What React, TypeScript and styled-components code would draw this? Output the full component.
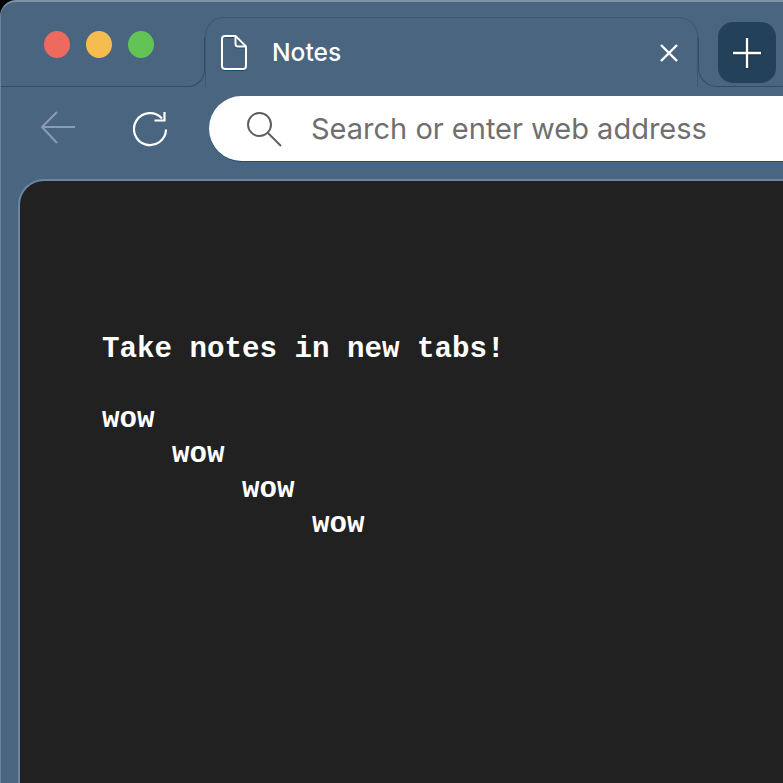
import styled, {createGlobalStyle} from 'styled-components';

const GlobalStyle = createGlobalStyle`
  html, body {
    margin: 0;
    padding: 0;
    background: #000;
  }
  #root {
    width: 783px;
    height: 783px;
    overflow: hidden;
  }
`;

const BAR = '#4a6580';
const EDGE = '#344b61';

const Window = styled.div`
  width: 783px;
  height: 783px;
  box-sizing: border-box;
  display: flex;
  flex-direction: column;
  background: ${BAR};
  border-top: 2px solid #7d93a9;
  border-left: 1px solid #6c8298;
  border-top-left-radius: 16px;
  overflow: hidden;
`;

const TabStrip = styled.div`
  height: 85px;
  flex: none;
  display: flex;
`;

const Lights = styled.div`
  position: relative;
  width: 204px;
  flex: none;
  box-sizing: border-box;
  display: flex;
  gap: 16px;
  padding: 29px 0 0 43px;

  /* soft edge that curves from the tab side into the strip bottom */
  &::after {
    content: '';
    position: absolute;
    left: -2px;
    right: 0;
    bottom: 0;
    height: 50px;
    box-sizing: border-box;
    border-right: 1px solid ${EDGE};
    border-bottom: 1px solid ${EDGE};
    border-bottom-right-radius: 17px;
    filter: blur(0.6px);
  }
`;

const Light = styled.span<{$color: string}>`
  width: 26px;
  height: 27px;
  border-radius: 50%;
  background: ${(p) => p.$color};
`;

const Tab = styled.div`
  width: 493px;
  flex: none;
  margin-top: 15px;
  box-sizing: border-box;
  display: flex;
  align-items: flex-start;
  padding: 17px 18px 0 15px;
  border-top: 1px solid #3f586f;
  border-left: 1px solid #3f586f;
  border-right: 1px solid #3f586f;
  border-radius: 19px 19px 0 0;
`;

const DocIcon = styled.svg`
  flex: none;
  filter: drop-shadow(0 1px 0 #1f4a6b);
`;

const TabTitle = styled.span`
  margin-left: 25px;
  flex: 1;
  font: 500 24.6px/34px 'Inter', sans-serif;
  color: #fff;
`;

const TabClose = styled.svg`
  margin-top: 8px;
  width: 20px;
  height: 20px;
`;

const NewTabArea = styled.div`
  position: relative;
  flex: 1;
  box-sizing: border-box;
  padding: 20px 0 0 20px;

  &::before {
    content: '';
    position: absolute;
    left: 0;
    right: 0;
    bottom: 0;
    height: 50px;
    box-sizing: border-box;
    border-left: 1px solid ${EDGE};
    border-bottom: 1px solid ${EDGE};
    border-bottom-left-radius: 19px;
    filter: blur(0.6px);
  }
`;

const NewTabButton = styled.div`
  position: relative;
  width: 58px;
  height: 61px;
  border-radius: 15px;
  background: #23425a;
  display: flex;
  align-items: center;
  justify-content: center;
`;

const PlusIcon = styled.svg`
  filter: drop-shadow(0 0 1px #0c1722);
`;

const Toolbar = styled.div`
  height: 92px;
  flex: none;
  display: flex;
  align-items: flex-start;
`;

const NavIcon = styled.svg<{$left: number}>`
  flex: none;
  margin-top: 23px;
  margin-left: ${(p) => p.$left}px;
`;

const AddressBar = styled.div`
  flex: 1;
  height: 65px;
  margin: 9px 0 0 40px;
  box-sizing: border-box;
  display: flex;
  align-items: center;
  padding-left: 37px;
  background: #fff;
  border-radius: 33px 0 0 33px;
  box-shadow: 0 1px 0 #1d5078;
`;

const AddressText = styled.span`
  margin-left: 29px;
  font: 400 29px/1 'Inter', sans-serif;
  color: #6f6f6f;
  white-space: nowrap;
`;

const Content = styled.div`
  flex: 1;
  margin-left: 17px;
  box-sizing: border-box;
  padding: 151px 0 0 82px;
  background: #212121;
  border-top: 2px solid #6b87a0;
  border-left: 2px solid #6b87a0;
  border-top-left-radius: 26px;
`;

const Note = styled.pre`
  margin: 0;
  font: 700 29.17px/35px 'Liberation Mono', monospace;
  color: #fff;
`;

export default function App() {
  return (
    <>
      <GlobalStyle />
      <Window>
        <TabStrip>
          <Lights>
            <Light $color='#ee6a5f' />
            <Light $color='#f5bd4f' />
            <Light $color='#61c454' />
          </Lights>
          <Tab>
            <DocIcon width='26' height='35' viewBox='0 0 26 35' fill='none' stroke='#fff' strokeWidth='2'>
              <path d='M4 1h10.5L25 11.5V31a3 3 0 0 1-3 3H4a3 3 0 0 1-3-3V4a3 3 0 0 1 3-3z' />
              <path d='M14.5 1v8a2.5 2.5 0 0 0 2.5 2.5h8' />
            </DocIcon>
            <TabTitle>Notes</TabTitle>
            <TabClose viewBox='0 0 20 20' stroke='#fff' strokeWidth='2.4'>
              <path d='M2 2l16 16M18 2L2 18' />
            </TabClose>
          </Tab>
          <NewTabArea>
            <NewTabButton>
              <PlusIcon width='30' height='32' viewBox='0 0 30 32' stroke='#fff' strokeWidth='2.4'>
                <path d='M15 1v30M1 16h28' />
              </PlusIcon>
            </NewTabButton>
          </NewTabArea>
        </TabStrip>
        <Toolbar>
          <NavIcon $left={39} width='36' height='34' viewBox='0 0 36 34' fill='none' stroke='#8b9cae' strokeWidth='2'>
            <path d='M35 17H2M17 2L2 17l15 16' />
          </NavIcon>
          <NavIcon $left={57} width='36' height='38' viewBox='0 0 36 38' fill='none' stroke='#fff' strokeWidth='2.2'>
            <path d='M29 8.5A16 16 0 1 0 33 19.5' />
            <path d='M21.5 10.5h10V2' />
          </NavIcon>
          <AddressBar>
            <svg width='36' height='36' viewBox='0 0 36 36' fill='none' stroke='#5f5f5f' strokeWidth='2'>
              <circle cx='13.5' cy='13.5' r='11.5' />
              <path d='M22 22l13 13' />
            </svg>
            <AddressText>Search or enter web address</AddressText>
          </AddressBar>
        </Toolbar>
        <Content>
          <Note>{`Take notes in new tabs!

wow
    wow
        wow
            wow`}</Note>
        </Content>
      </Window>
    </>
  );
}
